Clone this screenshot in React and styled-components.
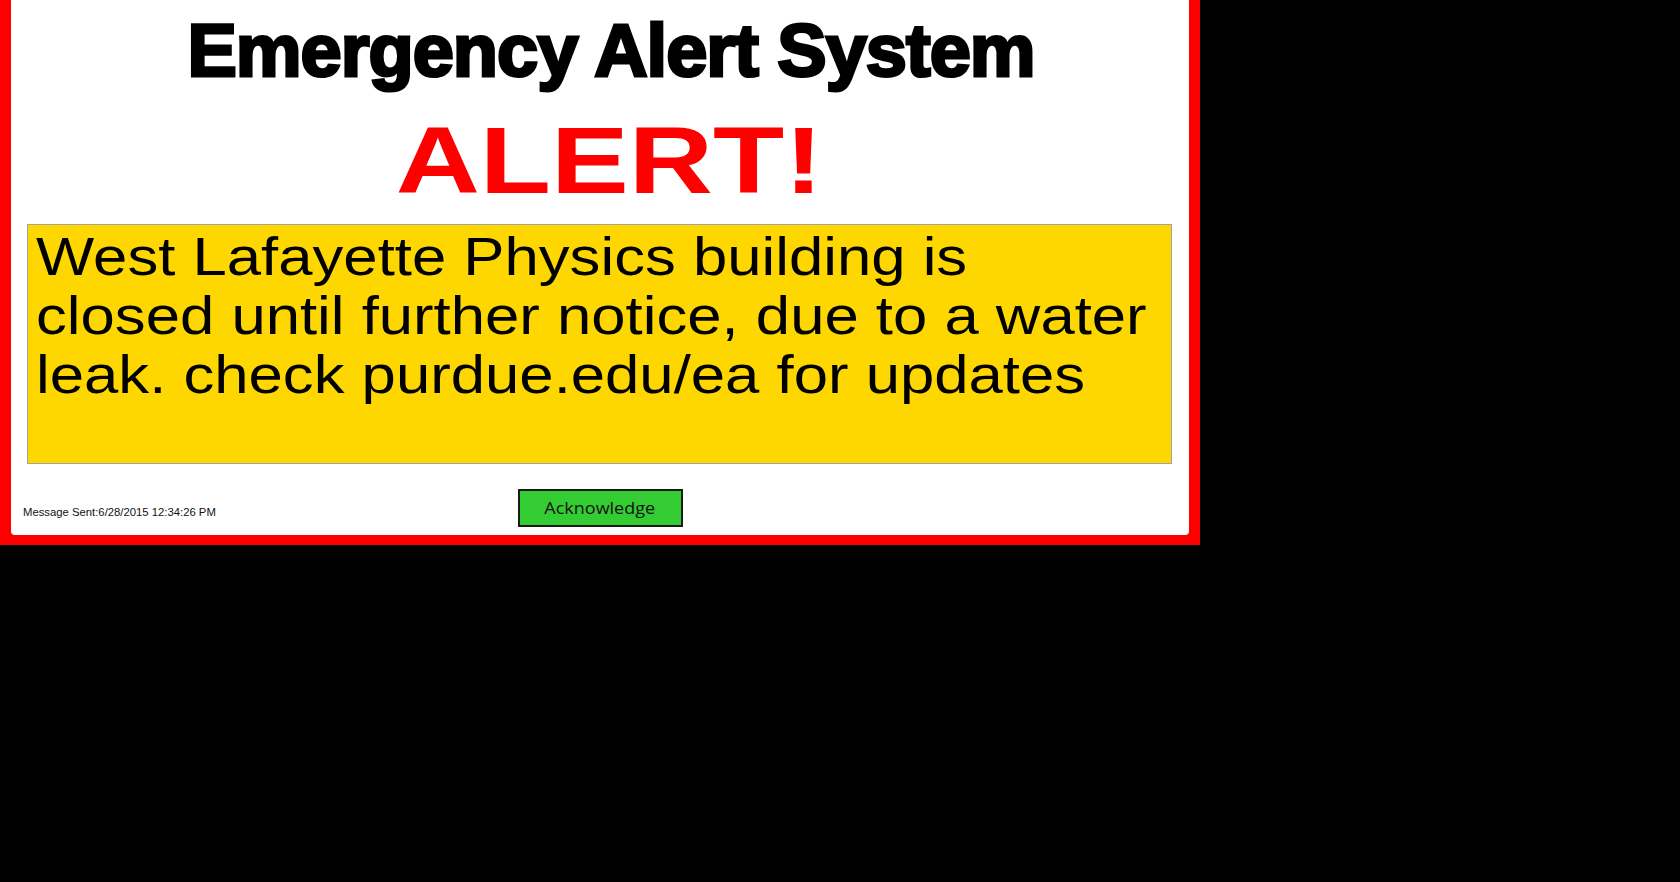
import styled, { createGlobalStyle } from 'styled-components';

const GlobalStyle = createGlobalStyle`
  html, body {
    margin: 0;
    padding: 0;
    background: #000;
  }
  * {
    box-sizing: border-box;
  }
`;

const Frame = styled.div`
  width: 1200px;
  height: 545px;
  background: #ff0000;
  padding: 0 11px 10px 11px;
`;

const Panel = styled.div`
  height: 100%;
  background: #fff;
  border-radius: 0 0 4px 4px;
  display: flex;
  flex-direction: column;
`;

const Title = styled.h1`
  margin: 0;
  padding: 14px 0 0 22px;
  text-align: center;
  font-family: 'Liberation Sans', Arial, sans-serif;
  font-weight: bold;
  font-size: 74px;
  line-height: 74px;
  color: #000;
  -webkit-text-stroke: 3px #000;
  letter-spacing: -1px;

  span {
    display: inline-block;
    transform: scaleX(1.0);
  }
`;

const AlertWord = styled.h2`
  margin: 26px 0 0 0;
  padding-left: 18px;
  text-align: center;
  font-family: 'Liberation Sans', Arial, sans-serif;
  font-weight: bold;
  font-size: 94px;
  line-height: 94px;
  color: #ff0000;

  span {
    display: inline-block;
    transform: scaleX(1.24);
  }
`;

const MessageBox = styled.div`
  margin: 16px 17px 0 16px;
  height: 240px;
  background: #ffd700;
  border: 1px solid #a3a3a3;
  padding: 2px 8px;
  overflow: hidden;
`;

const MessageText = styled.p`
  margin: 0;
  font-family: 'Liberation Sans', Arial, sans-serif;
  font-size: 54px;
  line-height: 59px;
  color: #000;
  white-space: nowrap;
  transform: scaleX(1.142);
  transform-origin: left top;
`;

const Footer = styled.div`
  display: grid;
  grid-template-columns: 1fr auto 1fr;
  align-items: center;
  padding: 25px 12px 0 12px;
`;

const SentStamp = styled.span`
  margin-top: 8px;
  font-family: 'Liberation Sans', Arial, sans-serif;
  font-size: 11.3px;
  line-height: 13px;
  color: #111;
`;

const AckButton = styled.button`
  width: 165px;
  height: 38px;
  background: #33cc33;
  border: 2px solid #1a1a1a;
  border-radius: 0;
  padding: 0;
  font-family: 'Open Sans', 'DejaVu Sans', sans-serif;
  font-size: 15.5px;
  color: #111;
  cursor: pointer;

  span {
    display: inline-block;
    transform: scaleX(1.16);
  }
`;

export default function App() {
  return (
    <>
      <GlobalStyle />
      <Frame>
        <Panel>
          <Title>
            <span>Emergency Alert System</span>
          </Title>
          <AlertWord>
            <span>ALERT!</span>
          </AlertWord>
          <MessageBox>
            <MessageText>
              West Lafayette Physics building is
              <br />
              closed until further notice, due to a water
              <br />
              leak. check purdue.edu/ea for updates
            </MessageText>
          </MessageBox>
          <Footer>
            <SentStamp>Message Sent:6/28/2015 12:34:26 PM</SentStamp>
            <AckButton>
              <span>Acknowledge</span>
            </AckButton>
            <div />
          </Footer>
        </Panel>
      </Frame>
    </>
  );
}
